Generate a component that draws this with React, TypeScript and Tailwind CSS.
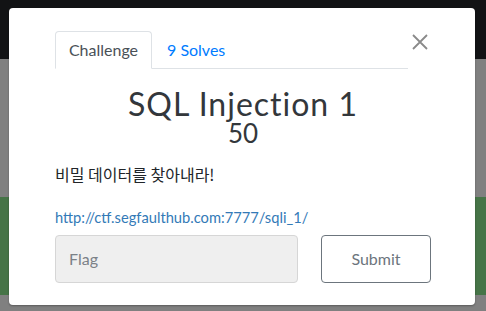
export default function App() {
  return (
    <div className="relative h-[311px] w-[486px] overflow-hidden font-['Lato','Noto_Sans_CJK_KR',sans-serif]">
      {/* backdrop bands */}
      <div className="flex h-full flex-col">
        <div className="h-[59px] bg-[#121315]" />
        <div className="h-[138px] bg-[#808080]" />
        <div className="h-[98px] bg-[#467447]" />
        <div className="flex-1 bg-[#808080]" />
      </div>

      {/* modal */}
      <div className="absolute left-[9px] top-[8px] h-[297px] w-[466px] rounded-[4px] bg-white shadow-[0_1px_2px_rgba(0,0,0,0.3)]">
        <button className="absolute left-[394px] top-[17px] flex h-[34px] w-[34px] items-center justify-center">
          <svg width="16" height="16" viewBox="0 0 16 16" fill="none" stroke="#8a8a8a" strokeWidth="1.8">
            <path d="M1 1L15 15M15 1L1 15" />
          </svg>
        </button>

        <div className="pl-[46px] pt-[23px]">
          <div className="flex h-[38px] w-[353px] border-b border-[#dee2e6]">
            <div className="-mb-px flex w-[97px] items-center justify-center rounded-t-[4px] border border-b-white border-[#dee2e6] bg-white text-[16px] text-[#495057]">
              Challenge
            </div>
            <div className="flex items-center px-[15px] text-[16px] text-[#007bff]">9 Solves</div>
          </div>

          <div className="w-[376px] text-center">
            <h1 className="mt-[19px] text-[32px] font-normal leading-[32px] tracking-[1px] text-[#33373b]">
              SQL Injection 1
            </h1>
            <h2 className="mt-[1px] text-[26px] font-normal leading-[24px] text-[#33373b]">50</h2>
          </div>

          <p className="mt-[18px] text-[16px] leading-[22px] text-[#212529] font-['Noto_Sans_CJK_KR','Lato',sans-serif]">
            비밀 데이터를 찾아내라!
          </p>
          <a className="mt-[22px] block text-[14.7px] leading-[20px] text-[#337ab7]" href="#">
            http://ctf.segfaulthub.com:7777/sqli_1/
          </a>

          <div className="mt-[8px] flex gap-[23px]">
            <div className="flex h-[48px] w-[243px] items-center rounded-[4px] border border-[#d6d6d6] bg-[#efefef] px-[13px] text-[16px] text-[#7b8187]">
              Flag
            </div>
            <div className="flex h-[48px] w-[110px] items-center justify-center rounded-[4px] border border-[#6c757d] text-[16px] text-[#6c757d]">
              Submit
            </div>
          </div>
        </div>
      </div>
    </div>
  )
}
